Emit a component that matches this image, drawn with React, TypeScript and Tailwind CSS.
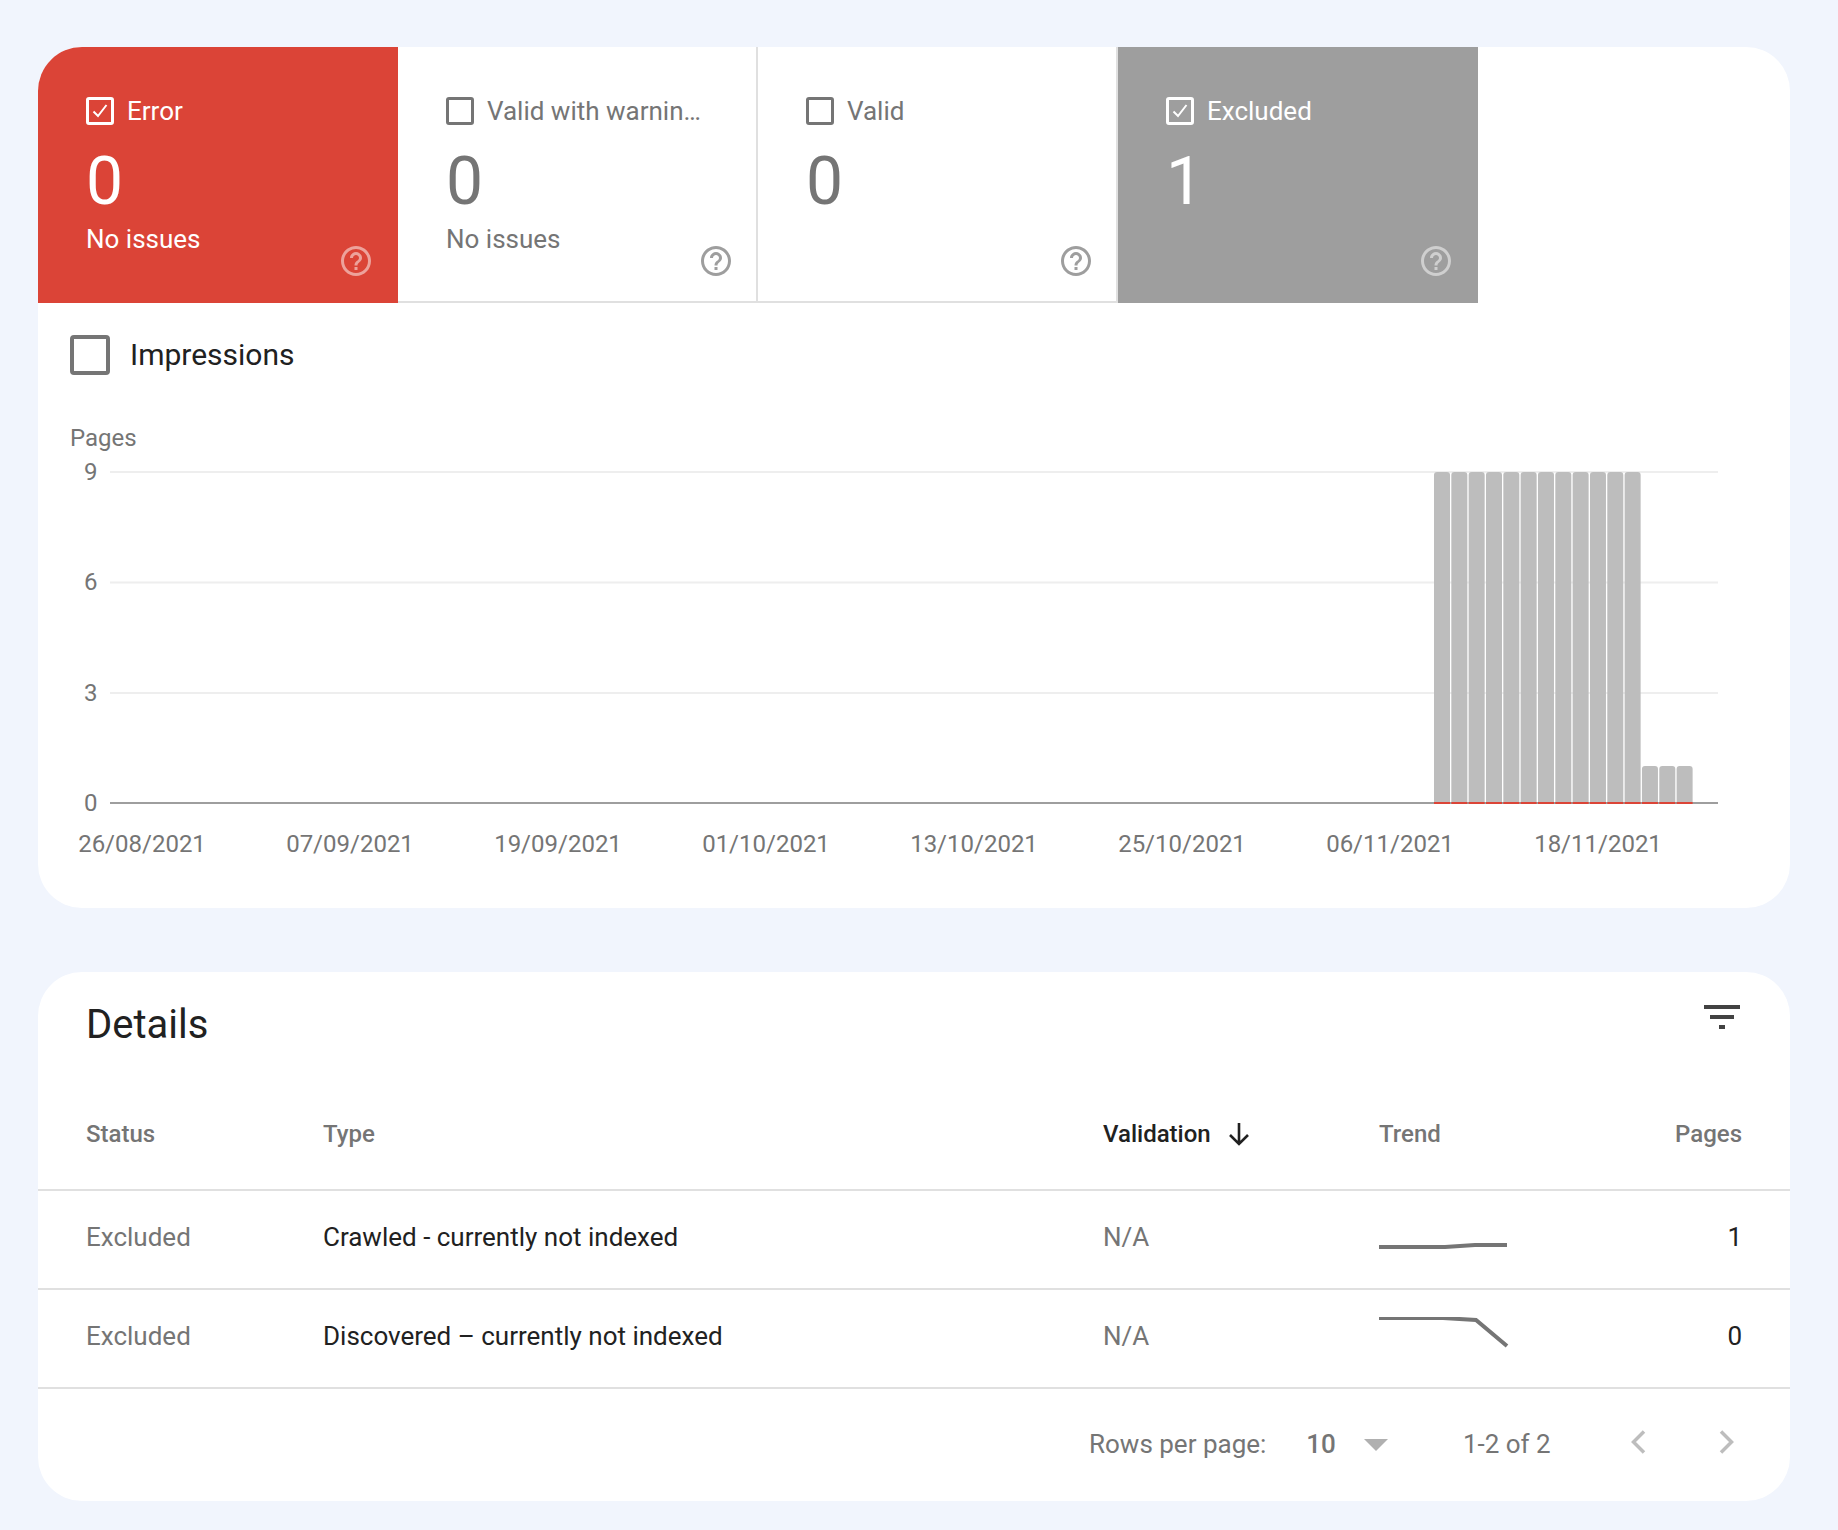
const HELP_PATH =
  "M11 18h2v-2h-2v2zm1-16C6.48 2 2 6.48 2 12s4.48 10 10 10 10-4.48 10-10S17.52 2 12 2zm0 18c-4.41 0-8-3.59-8-8s3.59-8 8-8 8 3.59 8 8-3.59 8-8 8zm0-14c-2.21 0-4 1.79-4 4h2c0-1.1.9-2 2-2s2 .9 2 2c0 2-3 1.75-3 5h2c0-2.25 3-2.5 3-5 0-2.21-1.79-4-4-4z";

const tiles = [
  { label: "Error", value: "0", sub: "No issues", checked: true, bg: "bg-[#db4437]" },
  { label: "Valid with warnin…", value: "0", sub: "No issues", checked: false, bg: "" },
  { label: "Valid", value: "0", sub: "", checked: false, bg: "" },
  { label: "Excluded", value: "1", sub: "", checked: true, bg: "bg-[#9e9e9e]" },
];

const dates = [
  "26/08/2021",
  "07/09/2021",
  "19/09/2021",
  "01/10/2021",
  "13/10/2021",
  "25/10/2021",
  "06/11/2021",
  "18/11/2021",
];

const bars = [9, 9, 9, 9, 9, 9, 9, 9, 9, 9, 9, 9, 1, 1, 1];

function Tile({ label, value, sub, checked, bg, index }: any) {
  const colored = bg !== "";
  return (
    <div
      className={`flex h-[256px] w-[360px] flex-col pl-[48px] pt-[50px] ${
        colored
          ? `${bg} text-white`
          : `border-b-2 border-[#e0e0e0] text-[#757575] ${index === 1 || index === 2 ? "border-r-2" : ""}`
      }`}
    >
      <div className="flex h-[28px] items-center">
        <div
          className={`flex h-[28px] w-[28px] shrink-0 items-center justify-center rounded-[3px] border-[3px] ${
            colored ? "border-white" : "border-[#757575]"
          }`}
        >
          {checked && (
            <svg width="20" height="20" viewBox="0 0 20 20" fill="none">
              <path d="M3.5 10.5l4.5 4.5 8.5-11" stroke="white" strokeWidth="2" />
            </svg>
          )}
        </div>
        <span className="ml-[13px] whitespace-nowrap text-[26px] leading-[28px]">{label}</span>
      </div>
      <div className="mt-[22px] h-[70px] text-[66px] leading-[70px]">{value}</div>
      <div className="mt-[4px] h-[36px] text-[26px] leading-[36px]">{sub}</div>
      <svg
        className={`-mt-[14px] shrink-0 self-end ${colored ? "mr-[24px]" : "mr-[22px]"}`}
        width="36"
        height="36"
        viewBox="0 0 24 24"
        fill={colored ? "rgba(255,255,255,0.5)" : "#9e9e9e"}
      >
        <path d={HELP_PATH} />
      </svg>
    </div>
  );
}

function Chart() {
  return (
    <svg width="1609" height="334" viewBox="0 0 1609 334" className="block">
      {[1, 111.5, 222].map((y) => (
        <line key={y} x1="0" x2="1608" y1={y} y2={y} stroke="#eeeeee" strokeWidth="2" />
      ))}
      {bars.map((v, i) => {
        const x = 1324 + i * 17.33;
        const top = v === 9 ? 1 : 295;
        return (
          <path
            key={i}
            d={`M${x} 332V${top + 3}a3 3 0 0 1 3 -3h10a3 3 0 0 1 3 3V332z`}
            fill="#bdbdbd"
          />
        );
      })}
      <line x1="0" x2="1608" y1="332" y2="332" stroke="#9e9e9e" strokeWidth="2" />
      {bars.map((_, i) => {
        const x = 1324 + i * 17.33;
        return <line key={i} x1={x} x2={x + 16} y1="332" y2="332" stroke="#db4437" strokeWidth="2" />;
      })}
    </svg>
  );
}

function Spark({ points }: { points: string }) {
  return (
    <svg width="130" height="40" viewBox="0 0 130 40" fill="none" className="block">
      <polyline points={points} stroke="#757575" strokeWidth="4" />
    </svg>
  );
}

const rows = [
  { type: "Crawled - currently not indexed", pages: "1", spark: "0,29 66,29 96,27 128,27" },
  { type: "Discovered – currently not indexed", pages: "0", spark: "0,1 64,1 97,3 128,29" },
];

const tableCols = "grid grid-cols-[237px_780px_276px_1fr] items-center pl-[48px] pr-[48px]";

export default function App() {
  return (
    <div
      className="min-h-[1530px] bg-[#f1f5fd] pl-[38px] pr-[48px] pt-[47px] pb-[29px]"
      style={{ fontFamily: "Roboto, sans-serif" }}
    >
      <section className="h-[861px] overflow-hidden rounded-[44px] bg-white">
        <div className="flex">
          {tiles.map((t, i) => (
            <Tile key={t.label} {...t} index={i} />
          ))}
        </div>
        <div className="ml-[32px] mt-[31px] flex h-[40px] items-center">
          <div className="mt-[2px] h-[40px] w-[40px] rounded-[4px] border-4 border-[#757575]" />
          <span className="ml-[20px] text-[30px] text-[#212121]">Impressions</span>
        </div>
        <div className="ml-[32px] mt-[49px] text-[24px] leading-[30px] text-[#757575]">Pages</div>
        <div className="mt-[18px] flex">
          <div className="ml-[46px] mt-[-14px] flex h-[361px] w-[26px] flex-col justify-between text-[24px] leading-[30px] text-[#757575]">
            <span>9</span>
            <span>6</span>
            <span>3</span>
            <span>0</span>
          </div>
          <Chart />
        </div>
        <div className="mt-[11px] grid grid-cols-[repeat(8,208px)] text-center text-[24px] leading-[30px] text-[#757575]">
          {dates.map((d) => (
            <span key={d}>{d}</span>
          ))}
        </div>
      </section>

      <section className="mt-[64px] h-[529px] overflow-hidden rounded-[44px] bg-white">
        <div className="flex h-[119px] items-start justify-between pl-[48px] pr-[50px]">
          <h2 className="mt-[30px] text-[40px] leading-[46px] text-[#212121]">Details</h2>
          <svg className="mt-[33px]" width="36" height="24" viewBox="0 0 36 24" fill="#424242">
            <rect x="0" y="0" width="36" height="4" />
            <rect x="6" y="10" width="24" height="4" />
            <rect x="15" y="20" width="6" height="4" />
          </svg>
        </div>
        <div className={`${tableCols} h-[100px] border-b-2 border-[#e0e0e0] pb-[12px] text-[24px] font-medium text-[#757575]`}>
          <span>Status</span>
          <span>Type</span>
          <span className="flex items-center text-[#212121]">
            Validation
            <svg className="ml-[16px]" width="24" height="26" viewBox="0 0 24 26" fill="none">
              <path d="M12 2v21M3 14l9 9 9-9" stroke="#212121" strokeWidth="2.6" />
            </svg>
          </span>
          <span className="flex justify-between">
            <span>Trend</span>
            <span>Pages</span>
          </span>
        </div>
        {rows.map((r) => (
          <div
            key={r.type}
            className={`${tableCols} h-[99px] border-b-2 border-[#e0e0e0] pb-[4px] text-[26px] text-[#757575]`}
          >
            <span>Excluded</span>
            <span className="text-[#212121]">{r.type}</span>
            <span>N/A</span>
            <span className="flex items-center justify-between">
              <Spark points={r.spark} />
              <span className="text-[#212121]">{r.pages}</span>
            </span>
          </div>
        ))}
        <div className="flex h-[113px] items-center pb-[2px] pl-[1051px] text-[26px] text-[#757575]">
          <span>Rows per page:</span>
          <span className="ml-[40px] font-medium">10</span>
          <svg className="ml-[28px]" width="24" height="12" viewBox="0 0 24 12" fill="#b0b0b0">
            <path d="M0 0h24L12 12z" />
          </svg>
          <span className="ml-[75px]">1-2 of 2</span>
          <svg className="mb-[6px] ml-[79px]" width="16" height="24" viewBox="0 0 16 24" fill="none">
            <path d="M14 1.5L3.5 12 14 22.5" stroke="#bdbdbd" strokeWidth="3.5" />
          </svg>
          <svg className="mb-[6px] ml-[73px]" width="16" height="24" viewBox="0 0 16 24" fill="none">
            <path d="M2 1.5L12.5 12 2 22.5" stroke="#bdbdbd" strokeWidth="3.5" />
          </svg>
        </div>
      </section>
    </div>
  );
}
